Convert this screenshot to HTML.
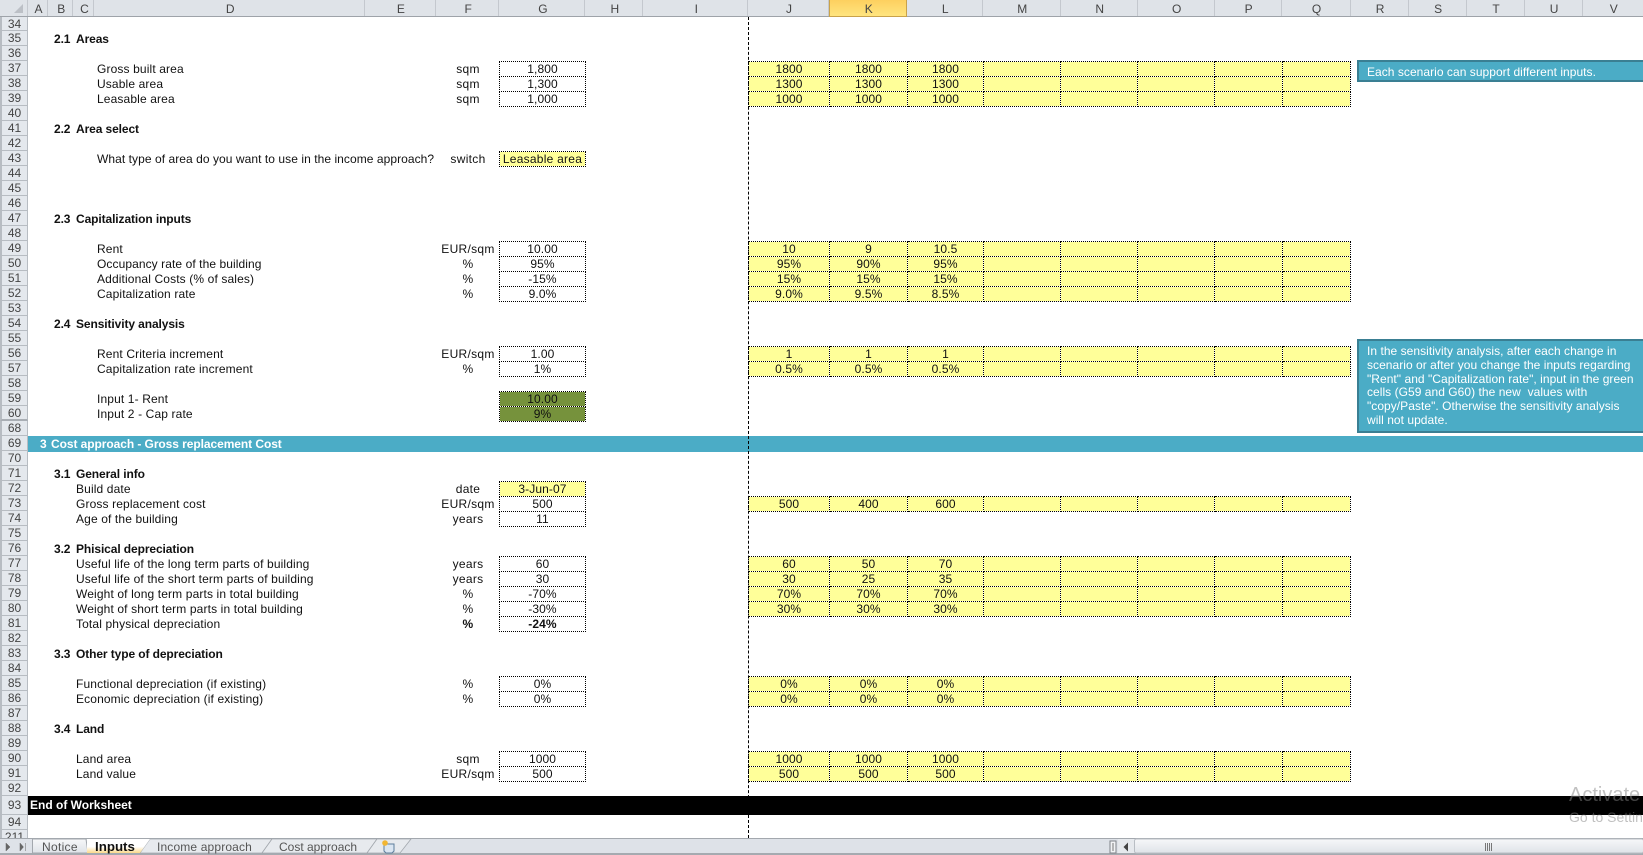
<!DOCTYPE html>
<html lang="en"><head><meta charset="utf-8"><title>Inputs</title>
<style>
html,body{margin:0;padding:0;background:#fff}
#s{position:relative;width:1643px;height:855px;overflow:hidden;background:#fff;font:12px/15px "Liberation Sans",Arial,sans-serif;color:#111;filter:blur(.25px)}
.t{position:absolute;height:15px;line-height:15px;white-space:nowrap;letter-spacing:.13px;margin-top:1px}
.b{font-weight:bold;letter-spacing:-.1px}
.d{left:97px}.e{left:76px}.n{left:54px}
.u{left:436px;width:64px;text-align:center;letter-spacing:.3px}
table{position:absolute;border-collapse:collapse;table-layout:fixed;font:12px/13px "Liberation Sans",Arial,sans-serif;color:#111;letter-spacing:.1px}
td{border:1px dotted #000;padding:0;height:15px;box-sizing:border-box;text-align:center;overflow:hidden;white-space:nowrap}
.g{left:499px;width:87px}
.y td{background:#ffff99}
.r{left:748px;width:602px}
.gr td{background:#76923c}
#hd{position:absolute;left:0;top:0;width:1643px;height:16px;display:flex;background:#dfe3e8;border-bottom:1px solid #9ea3a9;color:#444;font-size:12px;line-height:18px;text-align:center}
#hd div{box-sizing:border-box;border-right:1px solid #c4c8ce;height:16px;overflow:hidden;padding-left:2px}
#hd .k{background:linear-gradient(#fdd05f,#ffe57f);border-right:1px solid #c9a24a;border-left:1px solid #c9a24a;box-shadow:0 1px 0 #c9a24a}
#rh{position:absolute;left:0;top:17px;width:28px;background:#e4e8ed;color:#444;font-size:12px;text-align:center}
#rh div{box-sizing:border-box;height:15px;line-height:14px;border-bottom:1px solid #b7bcc2;border-right:1px solid #b7bcc2;border-left:2px solid #b7bcc2}
#ba{position:absolute;left:28px;top:436px;width:1615px;height:16px;background:#4bacc6;color:#fff;font-weight:bold;line-height:16px;letter-spacing:-.07px}
#bk{position:absolute;left:28px;top:796px;width:1615px;height:19px;background:#000;color:#fff;font-weight:bold;line-height:18px}
#vl{position:absolute;left:748px;top:17px;height:821px;border-left:1px dashed #000}
.nt{position:absolute;box-sizing:border-box;background:#4bacc6;border:2px solid #3a7f93;color:#fff;white-space:nowrap;left:1357px;width:300px;letter-spacing:.04px}
#ac{position:absolute;left:1569px;top:784px;font-size:20px;line-height:22px;color:rgba(130,130,130,.5);white-space:nowrap}
#ac2{position:absolute;left:1569px;top:809px;font-size:14px;line-height:16px;color:rgba(130,130,130,.5);white-space:nowrap}
svg{position:absolute;left:0;top:838px}
</style></head><body><div id="s">

<div id="hd">
<div style="width:28px;position:relative"><span style="position:absolute;right:4px;bottom:3px;width:0;height:0;border-left:9px solid transparent;border-bottom:9px solid #bcc0c6"></span></div>
<div style="width:20px">A</div><div style="width:25.5px">B</div><div style="width:21px">C</div><div style="width:270.5px">D</div><div style="width:71px">E</div><div style="width:63.5px">F</div><div style="width:86px">G</div><div style="width:58px">H</div><div style="width:105px">I</div><div style="width:80.5px">J</div><div class="k" style="width:78px">K</div><div style="width:76px">L</div><div style="width:78px">M</div><div style="width:77px">N</div><div style="width:77px">O</div><div style="width:67px">P</div><div style="width:69px">Q</div><div style="width:58px">R</div><div style="width:58px">S</div><div style="width:58px">T</div><div style="width:58px">U</div><div style="width:60.5px;border-right:0">V</div>
</div>

<div id="rh">
<div style="height:14px">34</div><div>35</div><div>36</div><div>37</div><div>38</div><div>39</div><div>40</div><div>41</div><div>42</div><div>43</div><div>44</div><div>45</div><div>46</div><div>47</div><div>48</div><div>49</div><div>50</div><div>51</div><div>52</div><div>53</div><div>54</div><div>55</div><div>56</div><div>57</div><div>58</div><div>59</div><div style="border-bottom:2px solid #a9aeb4">60</div><div>68</div><div>69</div><div>70</div><div>71</div><div>72</div><div>73</div><div>74</div><div>75</div><div>76</div><div>77</div><div>78</div><div>79</div><div>80</div><div>81</div><div>82</div><div>83</div><div>84</div><div>85</div><div>86</div><div>87</div><div>88</div><div>89</div><div>90</div><div>91</div><div>92</div><div style="height:19px;line-height:18px">93</div><div>94</div><div style="height:8px;border-bottom:0;line-height:14px;overflow:hidden">211</div>
</div>

<div class="t b n" style="top:31px">2.1</div><div class="t b e" style="top:31px">Areas</div>
<div class="t d" style="top:61px">Gross built area</div><div class="t u" style="top:61px">sqm</div>
<div class="t d" style="top:76px">Usable area</div><div class="t u" style="top:76px">sqm</div>
<div class="t d" style="top:91px">Leasable area</div><div class="t u" style="top:91px">sqm</div>
<div class="t b n" style="top:121px">2.2</div><div class="t b e" style="top:121px">Area select</div>
<div class="t d" style="top:151px;letter-spacing:.06px">What type of area do you want to use in the income approach?</div><div class="t u" style="top:151px">switch</div>
<div class="t b n" style="top:211px">2.3</div><div class="t b e" style="top:211px">Capitalization inputs</div>
<div class="t d" style="top:241px">Rent</div><div class="t u" style="top:241px">EUR/sqm</div>
<div class="t d" style="top:256px;letter-spacing:.08px">Occupancy rate of the building</div><div class="t u" style="top:256px">%</div>
<div class="t d" style="top:271px">Additional Costs (% of sales)</div><div class="t u" style="top:271px">%</div>
<div class="t d" style="top:286px">Capitalization rate</div><div class="t u" style="top:286px">%</div>
<div class="t b n" style="top:316px">2.4</div><div class="t b e" style="top:316px">Sensitivity analysis</div>
<div class="t d" style="top:346px">Rent Criteria increment</div><div class="t u" style="top:346px">EUR/sqm</div>
<div class="t d" style="top:361px">Capitalization rate increment</div><div class="t u" style="top:361px">%</div>
<div class="t d" style="top:391px">Input 1- Rent</div>
<div class="t d" style="top:406px">Input 2 - Cap rate</div>
<div class="t b n" style="top:466px">3.1</div><div class="t b e" style="top:466px">General info</div>
<div class="t e" style="top:481px">Build date</div><div class="t u" style="top:481px">date</div>
<div class="t e" style="top:496px">Gross replacement cost</div><div class="t u" style="top:496px">EUR/sqm</div>
<div class="t e" style="top:511px">Age of the building</div><div class="t u" style="top:511px">years</div>
<div class="t b n" style="top:541px">3.2</div><div class="t b e" style="top:541px">Phisical depreciation</div>
<div class="t e" style="top:556px">Useful life of the long term parts of building</div><div class="t u" style="top:556px">years</div>
<div class="t e" style="top:571px">Useful life of the short term parts of building</div><div class="t u" style="top:571px">years</div>
<div class="t e" style="top:586px">Weight of long term parts in total building</div><div class="t u" style="top:586px">%</div>
<div class="t e" style="top:601px">Weight of short term parts in total building</div><div class="t u" style="top:601px">%</div>
<div class="t e" style="top:616px">Total physical depreciation</div><div class="t u b" style="top:616px">%</div>
<div class="t b n" style="top:646px">3.3</div><div class="t b e" style="top:646px">Other type of depreciation</div>
<div class="t e" style="top:676px">Functional depreciation (if existing)</div><div class="t u" style="top:676px">%</div>
<div class="t e" style="top:691px">Economic depreciation (if existing)</div><div class="t u" style="top:691px">%</div>
<div class="t b n" style="top:721px">3.4</div><div class="t b e" style="top:721px">Land</div>
<div class="t e" style="top:751px">Land area</div><div class="t u" style="top:751px">sqm</div>
<div class="t e" style="top:766px">Land value</div><div class="t u" style="top:766px">EUR/sqm</div>

<table class="g" style="top:61px"><tr><td>1,800</td></tr><tr><td>1,300</td></tr><tr><td>1,000</td></tr></table>
<table class="g y" style="top:151px"><tr><td style="letter-spacing:.25px">Leasable area</td></tr></table>
<table class="g" style="top:241px"><tr><td>10.00</td></tr><tr><td>95%</td></tr><tr><td>-15%</td></tr><tr><td>9.0%</td></tr></table>
<table class="g" style="top:346px"><tr><td>1.00</td></tr><tr><td>1%</td></tr></table>
<table class="g gr" style="top:391px"><tr><td>10.00</td></tr><tr><td>9%</td></tr></table>
<table class="g y" style="top:481px"><tr><td>3-Jun-07</td></tr></table>
<table class="g" style="top:496px"><tr><td>500</td></tr><tr><td>11</td></tr></table>
<table class="g" style="top:556px"><tr><td>60</td></tr><tr><td>30</td></tr><tr><td>-70%</td></tr><tr><td>-30%</td></tr><tr><td><b>-24%</b></td></tr></table>
<table class="g" style="top:676px"><tr><td>0%</td></tr><tr><td>0%</td></tr></table>
<table class="g" style="top:751px"><tr><td>1000</td></tr><tr><td>500</td></tr></table>

<table class="r y" style="top:61px"><colgroup><col style="width:81px"><col style="width:78px"><col style="width:76px"><col style="width:77px"><col style="width:77px"><col style="width:77px"><col style="width:68px"><col style="width:68px"></colgroup>
<tr><td>1800</td><td>1800</td><td>1800</td><td></td><td></td><td></td><td></td><td></td></tr>
<tr><td>1300</td><td>1300</td><td>1300</td><td></td><td></td><td></td><td></td><td></td></tr>
<tr><td>1000</td><td>1000</td><td>1000</td><td></td><td></td><td></td><td></td><td></td></tr></table>
<table class="r y" style="top:241px"><colgroup><col style="width:81px"><col style="width:78px"><col style="width:76px"><col style="width:77px"><col style="width:77px"><col style="width:77px"><col style="width:68px"><col style="width:68px"></colgroup>
<tr><td>10</td><td>9</td><td>10.5</td><td></td><td></td><td></td><td></td><td></td></tr>
<tr><td>95%</td><td>90%</td><td>95%</td><td></td><td></td><td></td><td></td><td></td></tr>
<tr><td>15%</td><td>15%</td><td>15%</td><td></td><td></td><td></td><td></td><td></td></tr>
<tr><td>9.0%</td><td>9.5%</td><td>8.5%</td><td></td><td></td><td></td><td></td><td></td></tr></table>
<table class="r y" style="top:346px"><colgroup><col style="width:81px"><col style="width:78px"><col style="width:76px"><col style="width:77px"><col style="width:77px"><col style="width:77px"><col style="width:68px"><col style="width:68px"></colgroup>
<tr><td>1</td><td>1</td><td>1</td><td></td><td></td><td></td><td></td><td></td></tr>
<tr><td>0.5%</td><td>0.5%</td><td>0.5%</td><td></td><td></td><td></td><td></td><td></td></tr></table>
<table class="r y" style="top:496px"><colgroup><col style="width:81px"><col style="width:78px"><col style="width:76px"><col style="width:77px"><col style="width:77px"><col style="width:77px"><col style="width:68px"><col style="width:68px"></colgroup>
<tr><td>500</td><td>400</td><td>600</td><td></td><td></td><td></td><td></td><td></td></tr></table>
<table class="r y" style="top:556px"><colgroup><col style="width:81px"><col style="width:78px"><col style="width:76px"><col style="width:77px"><col style="width:77px"><col style="width:77px"><col style="width:68px"><col style="width:68px"></colgroup>
<tr><td>60</td><td>50</td><td>70</td><td></td><td></td><td></td><td></td><td></td></tr>
<tr><td>30</td><td>25</td><td>35</td><td></td><td></td><td></td><td></td><td></td></tr>
<tr><td>70%</td><td>70%</td><td>70%</td><td></td><td></td><td></td><td></td><td></td></tr>
<tr><td>30%</td><td>30%</td><td>30%</td><td></td><td></td><td></td><td></td><td></td></tr></table>
<table class="r y" style="top:676px"><colgroup><col style="width:81px"><col style="width:78px"><col style="width:76px"><col style="width:77px"><col style="width:77px"><col style="width:77px"><col style="width:68px"><col style="width:68px"></colgroup>
<tr><td>0%</td><td>0%</td><td>0%</td><td></td><td></td><td></td><td></td><td></td></tr>
<tr><td>0%</td><td>0%</td><td>0%</td><td></td><td></td><td></td><td></td><td></td></tr></table>
<table class="r y" style="top:751px"><colgroup><col style="width:81px"><col style="width:78px"><col style="width:76px"><col style="width:77px"><col style="width:77px"><col style="width:77px"><col style="width:68px"><col style="width:68px"></colgroup>
<tr><td>1000</td><td>1000</td><td>1000</td><td></td><td></td><td></td><td></td><td></td></tr>
<tr><td>500</td><td>500</td><td>500</td><td></td><td></td><td></td><td></td><td></td></tr></table>

<div id="ba"><span style="position:absolute;left:12px">3</span><span style="position:absolute;left:23px">Cost approach - Gross replacement Cost</span></div>
<div id="bk"><span style="position:absolute;left:2px">End of Worksheet</span></div>
<div id="vl"></div>

<div class="nt" style="top:60px;height:22px;padding:1px 0 0 8px;line-height:18px">Each scenario can support different inputs.</div>
<div class="nt" style="top:339px;height:94px;padding:4px 0 0 8px;line-height:13.8px">In the sensitivity analysis, after each change in<br>scenario or after you change the inputs regarding<br>"Rent" and "Capitalization rate", input in the green<br>cells (G59 and G60) the new&nbsp; values with<br>"copy/Paste". Otherwise the sensitivity analysis<br>will not update.</div>

<div id="ac">Activate</div>
<div id="ac2">Go to Settin</div>

<svg width="1643" height="17" viewBox="0 0 1643 17" font-family="Liberation Sans, Arial, sans-serif" font-size="12">
<defs><linearGradient id="a" x1="0" y1="0" x2="0" y2="1"><stop offset="0" stop-color="#fff"/><stop offset=".55" stop-color="#fff"/><stop offset="1" stop-color="#fbd98a"/></linearGradient>
<linearGradient id="b" x1="0" y1="0" x2="0" y2="1"><stop offset="0" stop-color="#f6f7f9"/><stop offset="1" stop-color="#dfe3e8"/></linearGradient></defs>
<rect width="1643" height="17" fill="#dee2e8"/>
<rect y="0" width="1643" height="1" fill="#a3a8ae"/>
<rect y="15" width="1643" height="2" fill="#a5aab0"/>
<path d="M6 5l4 4-4 4zM20 5l3.500 4-3.500 4zM25.500 5v8" fill="#666" stroke="#666" stroke-width=".5"/>
<path d="M32.500 15V1H86l2 14z" fill="url(#b)" stroke="#a3a8ae"/>
<path d="M140 15L150 1H272L262 15z" fill="#e7eaee" stroke="#a3a8ae" stroke-width=".8"/>
<path d="M262 15L272 1H377L367 15z" fill="#e7eaee" stroke="#a3a8ae" stroke-width=".8"/>
<path d="M367 15L377 1H411L400 15z" fill="#e7eaee" stroke="#a3a8ae" stroke-width=".8"/>
<path d="M87 15V1H150L140 15z" fill="url(#a)"/>
<text x="42" y="13" fill="#555" letter-spacing=".3">Notice</text>
<text x="95" y="13" fill="#111" font-weight="bold" font-size="13.300">Inputs</text>
<text x="157" y="13" fill="#555" letter-spacing=".15">Income approach</text>
<text x="279" y="13" fill="#555">Cost approach</text>
<path d="M384 6h10v7l-2 2h-6l-2-2z" fill="#dbe6f2" stroke="#5e7d9c"/>
<circle cx="385" cy="5" r="2.800" fill="#f2b632"/>
<rect x="1110" y="3" width="6" height="12" fill="#f2f3f5" stroke="#7e8389"/>
<rect x="1112.500" y="5" width="1" height="8" fill="#777"/>
<rect x="1118" y="1" width="16" height="14" fill="#e6e9ed"/>
<path d="M1128 4.500v9l-4.500-4.500z" fill="#444"/>
<rect x="1134.500" y="1" width="509" height="14" rx="2" fill="url(#b)" stroke="#b9bec4"/>
<path d="M1485.500 5v8M1487.500 5v8M1489.500 5v8M1491.500 5v8" stroke="#777" stroke-width="1"/>
</svg>
</div></body></html>
